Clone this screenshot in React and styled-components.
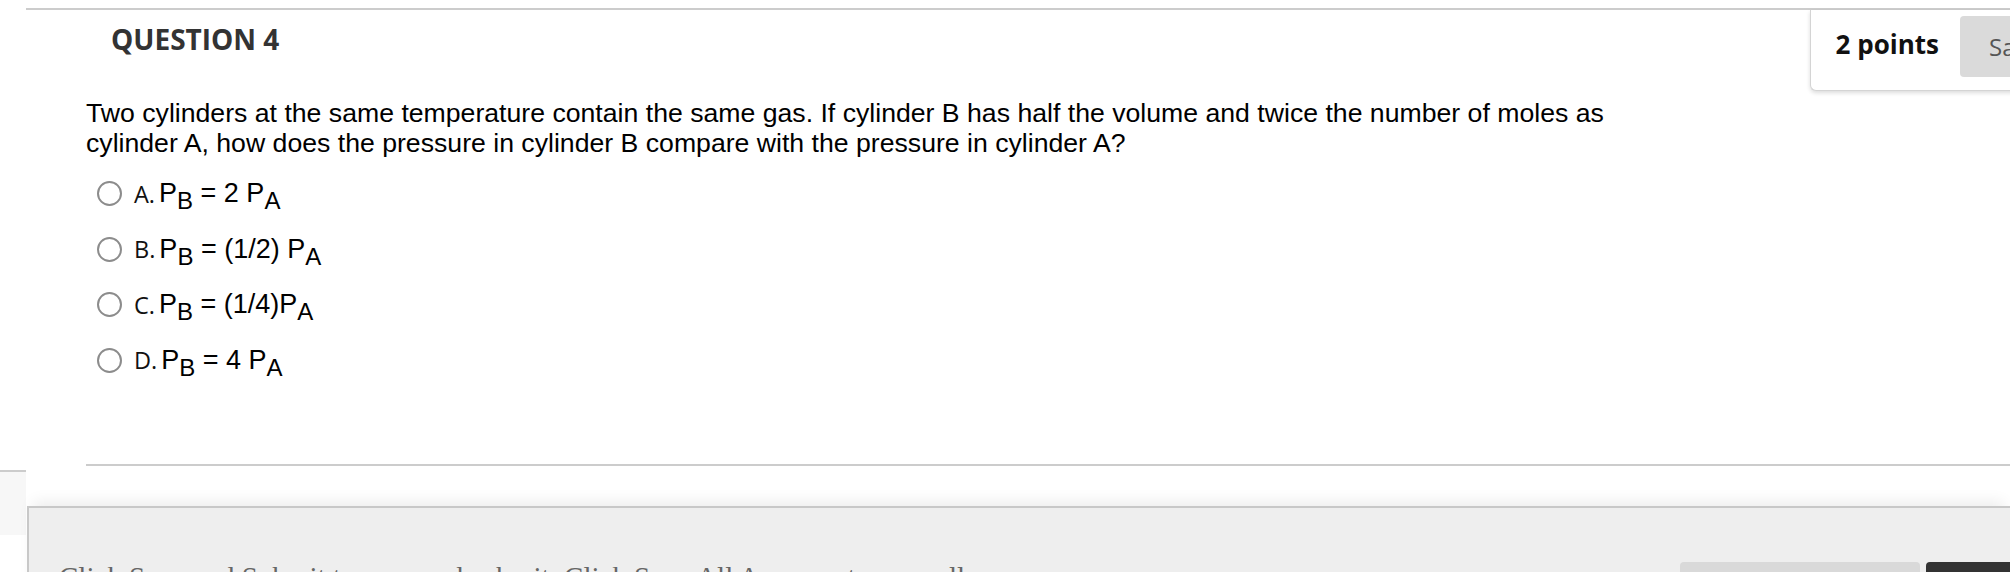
import React from "react"
import styled, { createGlobalStyle } from "styled-components"

const options = [
    { letter: "A.", parts: ["P", "B", " = 2 P", "A"] },
    { letter: "B.", parts: ["P", "B", " = (1/2) P", "A"] },
    { letter: "C.", parts: ["P", "B", " = (1/4)P", "A"] },
    { letter: "D.", parts: ["P", "B", " = 4 P", "A"] },
]

const App = () => {
    return (
        <>
            <GlobalStyle />
            <Page>
                <QuestionBlock>
                    <Header>
                        <Title>QUESTION 4</Title>
                        <PointsBox>
                            <Points>2 points</Points>
                            <SaveButton>Save Answer</SaveButton>
                        </PointsBox>
                    </Header>
                    <QuestionText>
                        Two cylinders at the same temperature contain the same gas. If cylinder B has half the volume and twice the number of moles as cylinder A, how does the pressure in cylinder B compare with the pressure in cylinder A?
                    </QuestionText>
                    <OptionList>
                        {options.map((o) => (
                            <Option key={o.letter}>
                                <Radio />
                                <Letter>{o.letter}</Letter>
                                <Formula>
                                    {o.parts[0]}
                                    <Sub>{o.parts[1]}</Sub>
                                    {o.parts[2]}
                                    <Sub>{o.parts[3]}</Sub>
                                </Formula>
                            </Option>
                        ))}
                    </OptionList>
                    <Separator />
                </QuestionBlock>
                <Footer>
                    <SideTab />
                    <Panel>
                        <PanelText>
                            Click Save and Submit to save and submit. Click Save All Answers to save all answers.
                        </PanelText>
                        <ButtonGroup>
                            <FooterButton>Save All Answers</FooterButton>
                            <FooterButton dark>Save and Submit</FooterButton>
                        </ButtonGroup>
                    </Panel>
                </Footer>
            </Page>
        </>
    )
}

const GlobalStyle = createGlobalStyle`
    html, body { margin: 0; padding: 0; background: #fff }
    body {
        width: 2010px;
        height: 572px;
        overflow: hidden;
        font-family: "Open Sans", sans-serif;
    }
`

const Page = styled.div`
    display: flex;
    flex-direction: column;
    width: 2010px;
`

const QuestionBlock = styled.section`
    margin: 8px 0 0 26px;
    border-top: 2px solid #cccccc;
`

const Header = styled.div`
    display: flex;
    align-items: flex-start;
    justify-content: space-between;
`

const Title = styled.h2`
    margin: 10px 0 0 85px;
    font: 700 28px/38px "Open Sans", sans-serif;
    color: #333;
`

const PointsBox = styled.div`
    flex-shrink: 0;
    display: flex;
    align-items: center;
    gap: 21px;
    margin-right: -230px;
    padding: 6px 0 13px 25px;
    background: #fff;
    border-left: 1px solid #d4d4d4;
    border-bottom: 1px solid #d4d4d4;
    border-bottom-left-radius: 6px;
    box-shadow: 0 2px 4px rgba(0, 0, 0, 0.14);
`

const Points = styled.span`
    margin-top: -5px;
    font: 700 26px/36px "Open Sans", sans-serif;
    color: #111;
`

const SaveButton = styled.button`
    width: 280px;
    height: 61px;
    padding: 0 0 0 29px;
    border: none;
    border-radius: 4px;
    background: #dadada;
    text-align: left;
    font: 400 24px "Open Sans", sans-serif;
    color: #555;
`

const QuestionText = styled.p`
    width: 1575px;
    margin: 7px 0 0 60px;
    font: 400 26.65px/30px "Liberation Sans", Arial, sans-serif;
    color: #000;
`

const OptionList = styled.ul`
    list-style: none;
    margin: 8px 0 0 71px;
    padding: 0;
`

const Option = styled.li`
    display: flex;
    align-items: center;
    height: 55.5px;
`

const Radio = styled.span`
    box-sizing: border-box;
    width: 25px;
    height: 25px;
    margin-right: 12px;
    border: 2px solid #8c8c8c;
    border-radius: 50%;
    background: #fff;
`

const Letter = styled.span`
    margin-right: 4px;
    font: 400 23.5px/30px "Open Sans", sans-serif;
    color: #111;
`

const Formula = styled.span`
    font: 400 27px/30px "Liberation Sans", Arial, sans-serif;
    color: #000;
    white-space: pre;
`

const Sub = styled.span`
    position: relative;
    top: 7px;
    font-size: 24px;
`

const Separator = styled.div`
    margin: 76px 0 0 60px;
    border-top: 2px solid #cccccc;
`

const Footer = styled.div`
    display: flex;
    align-items: flex-start;
    margin-top: 4px;
`

const SideTab = styled.div`
    flex-shrink: 0;
    width: 26px;
    height: 63px;
    background: #f7f7f7;
    border-top: 2px solid #cccccc;
`

const Panel = styled.div`
    flex: 1;
    display: flex;
    align-items: flex-start;
    height: 120px;
    margin: 36px 0 0 1px;
    padding: 54px 0 0 30px;
    background: #eeeeee;
    border-top: 2px solid #c8c8c8;
    border-left: 2px solid #c8c8c8;
    box-shadow: 0 -10px 14px -6px rgba(0, 0, 0, 0.08);
`

const PanelText = styled.p`
    flex: 1;
    margin: -2px 0 0;
    font: 400 29px/34px "Liberation Serif", serif;
    color: #666;
    white-space: nowrap;
`

const ButtonGroup = styled.div`
    flex-shrink: 0;
    display: flex;
    gap: 6px;
    margin-right: -116px;
`

const FooterButton = styled.button`
    width: ${(props) => (props.dark ? "200px" : "240px")};
    height: 50px;
    border: none;
    border-radius: 4px;
    background: ${(props) => (props.dark ? "#333" : "#d9d9d9")};
    color: ${(props) => (props.dark ? "#fff" : "#333")};
    font: 400 20px "Open Sans", sans-serif;
`

export default App
